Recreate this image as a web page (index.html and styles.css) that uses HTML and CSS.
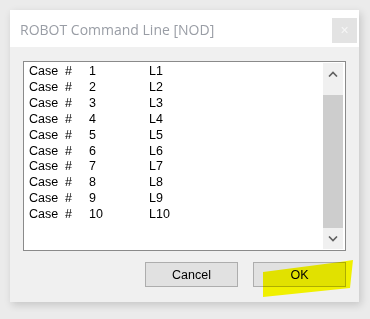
FILE: index.html
```html
<!DOCTYPE html>
<html lang="en">
  <head>
    <meta charset="UTF-8" />
    <title>ROBOT Command Line [NOD]</title>
    <link rel="stylesheet" href="styles.css">
  </head>
  <body>
    <div class="dialog">
      <div class="titlebar">
        <span class="title">ROBOT Command Line [NOD]</span>
        <button class="close-btn">&times;</button>
      </div>
      <div class="content">
        <div class="listbox">
          <div class="lines">
            <div class="line"><span>Case</span><span>#</span><span>1</span><span>L1</span></div>
            <div class="line"><span>Case</span><span>#</span><span>2</span><span>L2</span></div>
            <div class="line"><span>Case</span><span>#</span><span>3</span><span>L3</span></div>
            <div class="line"><span>Case</span><span>#</span><span>4</span><span>L4</span></div>
            <div class="line"><span>Case</span><span>#</span><span>5</span><span>L5</span></div>
            <div class="line"><span>Case</span><span>#</span><span>6</span><span>L6</span></div>
            <div class="line"><span>Case</span><span>#</span><span>7</span><span>L7</span></div>
            <div class="line"><span>Case</span><span>#</span><span>8</span><span>L8</span></div>
            <div class="line"><span>Case</span><span>#</span><span>9</span><span>L9</span></div>
            <div class="line"><span>Case</span><span>#</span><span>10</span><span>L10</span></div>
          </div>
          <div class="scrollbar">
            <div class="arrow">
              <svg width="10" height="6" viewBox="0 0 10 6"><path d="M1 5.5 L5 1.5 L9 5.5" fill="none" stroke="#606060" stroke-width="1.6"/></svg>
            </div>
            <div class="track"><div class="thumb"></div></div>
            <div class="arrow">
              <svg width="10" height="6" viewBox="0 0 10 6"><path d="M1 0.5 L5 4.5 L9 0.5" fill="none" stroke="#606060" stroke-width="1.6"/></svg>
            </div>
          </div>
        </div>
        <div class="buttons">
          <button class="dlg-btn">Cancel</button>
          <button class="dlg-btn">OK</button>
        </div>
      </div>
      <!-- highlighter mark over OK -->
      <div class="marker"></div>
    </div>
  </body>
</html>
```
FILE: styles.css
```css
* {
  box-sizing: border-box;
}
body {
  margin: 0;
  padding: 10px;
  background: #ebebeb;
  font-family: "Liberation Sans", Arial, sans-serif;
}
.dialog {
  position: relative;
  width: 349px;
  height: 292px;
  background: #f0f0f0;
  box-shadow: 2px 3px 8px rgba(0, 0, 0, 0.16);
}
.titlebar {
  height: 37px;
  background: #fff;
  display: flex;
  justify-content: space-between;
  align-items: flex-start;
  padding-left: 10px;
}
.title {
  margin-top: 10px;
  font-family: "Open Sans", sans-serif;
  font-size: 14px;
  line-height: 20px;
  color: #999da5;
}
.close-btn {
  margin-top: 8px;
  margin-right: 2px;
  width: 25px;
  height: 25px;
  border: none;
  padding: 0;
  background: #e3e3e3;
  color: #f6f6f6;
  font-size: 14px;
  line-height: 25px;
}
.content {
  padding: 14px 13px 0 13px;
}
.listbox {
  height: 190px;
  display: flex;
  background: #fff;
  border: 1px solid #8a8a8a;
}
.lines {
  flex: 1;
  padding: 2px 0 0 5px;
  font-size: 12.5px;
  line-height: 15.9px;
  color: #000;
}
.line {
  display: grid;
  grid-template-columns: 36px 24px 60px auto;
}
.scrollbar {
  width: 20px;
  margin: 1px 2px 1px 0;
  display: flex;
  flex-direction: column;
  background: #f0f0f0;
}
.arrow {
  height: 22px;
  display: flex;
  align-items: center;
  justify-content: center;
}
.track {
  flex: 1;
  padding: 11px 0 0;
}
.thumb {
  height: 133px;
  background: #cdcdcd;
}
.buttons {
  margin-top: 11px;
  display: flex;
  justify-content: flex-end;
  gap: 15px;
}
.dlg-btn {
  width: 93px;
  height: 25px;
  border: 1px solid #adadad;
  background: #e1e1e1;
  font-family: "Liberation Sans", Arial, sans-serif;
  font-size: 12.5px;
  color: #000;
  padding: 0;
}
.marker {
  position: absolute;
  left: 253px;
  top: 250px;
  width: 90px;
  height: 38px;
  background: #ffff00;
  mix-blend-mode: multiply;
  clip-path: polygon(0 12px, 77px 2px, 90px 0, 87px 28px, 0 37px);
}
```
